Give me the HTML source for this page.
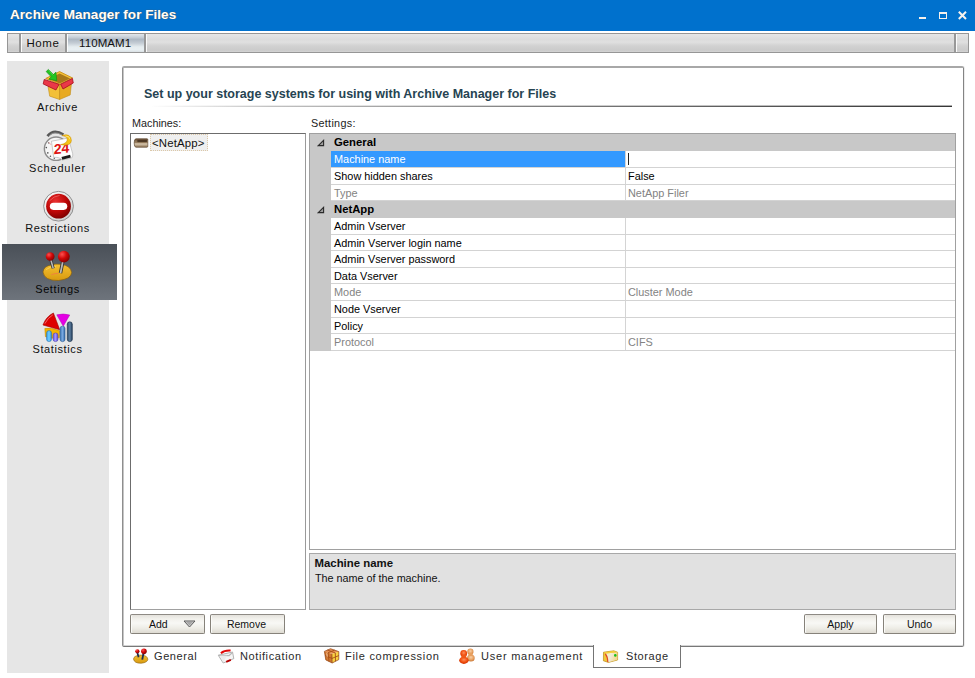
<!DOCTYPE html>
<html><head><meta charset="utf-8">
<style>
*{margin:0;padding:0;box-sizing:border-box}
html,body{width:975px;height:678px;overflow:hidden;background:#fff;font-family:"Liberation Sans",sans-serif;font-size:11px;color:#000}
.a{position:absolute}
#title{left:0;top:0;width:975px;height:31px;background:#0071cd}
#title .t{left:10px;top:7px;font-weight:bold;font-size:13.6px;color:#fff;white-space:nowrap;text-shadow:0 0 1px #7a5020}
/* top tab bar */
#tabbar{left:7px;top:33px;width:962px;height:20px;border:1px solid #969696;background:linear-gradient(#e6e6e6 0%,#dcdcdc 30%,#e0e0e0 45%,#d2d2d2 65%,#cbcbcb 90%,#d4d4d4 100%)}
.dv{top:0;width:3px;height:18px;border-left:2px solid #989898;border-right:1px solid #fafafa}
.tseg{top:0;height:18px;border-left:1px solid #a8a8a8;border-right:1px solid #a8a8a8;background:linear-gradient(#e8e8e8,#dadada 45%,#cfcfcf 55%,#dedede)}
.ttx{font-family:"Liberation Sans",sans-serif;font-size:11.5px;color:#111;white-space:nowrap}
/* sidebar */
#side{left:7px;top:61px;width:102px;height:612px;background:#e6e6e6}
#selbg{left:2px;top:244px;width:115px;height:56px;background:linear-gradient(#4a5058,#5b6169 50%,#6e747c)}
.sl{width:120px;left:-2.5px;text-align:center;font-size:11px;letter-spacing:0.6px;color:#111;white-space:nowrap}
/* main panel */
#panel{left:122px;top:66px;width:842px;height:581px;border-top:2px solid #a8a8a8;border-left:1px solid #8e8e8e;border-right:1px solid #848484;border-bottom:1px solid #787878;box-shadow:inset 1px 0 0 #c6c6c6,inset 0 -1px 0 #d4d4d4,1px 0 0 #ececec;border-radius:2px}
#hdr{left:144px;top:87px;font-weight:bold;font-size:12.5px;color:#264452;white-space:nowrap}
#hline{left:150px;top:106px;width:802px;height:1px;background:linear-gradient(90deg,rgba(50,50,50,0) 0%,rgba(50,50,50,0.3) 15%,rgba(50,50,50,0.6) 45%,#363636 100%)}
#hline2{left:150px;top:105px;width:802px;height:1px;background:linear-gradient(90deg,rgba(90,90,90,0) 0%,rgba(90,90,90,0.12) 15%,rgba(90,90,90,0.25) 45%,rgba(90,90,90,0.5) 100%)}
.lbl{font-size:10.8px;color:#222;white-space:nowrap}
#mlist{left:130px;top:133px;width:176px;height:477px;border:1px solid #6c6c6c;border-right-color:#9a9a9a;border-bottom-color:#a0a0a0;background:#fff}
#grid{left:309px;top:133px;width:647px;height:417px;border:1px solid #a0a0a0;background:#fff}
#gmargin{left:0;top:0;width:21px;height:217px;background:#c8c8c8}
.row{left:21px;width:624px;height:16.6px;border-bottom:1px solid #d3d3d3}
.cat{left:0;width:645px;height:16.6px;background:#c8c8c8}
.rn{left:3px;top:2px;font-size:10.9px;white-space:nowrap}
.rv{left:294px;top:0;height:100%;border-left:1px solid #d4d4d4}
.rvt{left:2px;top:2px;font-size:10.9px;white-space:nowrap}
.gray{color:#838383}
#desc{left:309px;top:553px;width:647px;height:57px;border:1px solid #a8a8a8;background:#e1e1e1}
.btn{height:20px;border:1px solid #86827a;border-top-color:#8e8a84;border-radius:2px;box-shadow:inset 1px 0 0 #fbfbf9;background:linear-gradient(#e4e2dc 0%,#f2f1ec 22%,#f8f8f5 45%,#eeede7 72%,#dedbd2 100%);text-align:center;font-size:10.5px;line-height:18px;color:#111}
/* bottom tabs */
.bt{top:650px;font-size:11px;letter-spacing:0.6px;color:#2a2a2a;white-space:nowrap}
#stab{left:593px;top:645px;width:88px;height:23px;border:1px solid #747474;border-top:none;background:#fff}
</style></head><body>

<div id="title" class="a"><div class="t a">Archive Manager for Files</div>
 <div class="a" style="left:919px;top:16.5px;width:6.5px;height:2.5px;background:#f4f0ec"></div>
 <div class="a" style="left:939px;top:12px;width:8px;height:7px;border:1px solid #f4f0ec;border-top-width:2px"></div>
 <svg class="a" style="left:957px;top:10px" width="11" height="11" viewBox="0 0 11 11"><path d="M1.8 1.8 L9 9 M9 1.8 L1.8 9" stroke="#f6f2ee" stroke-width="2"/></svg>
</div>

<div id="tabbar" class="a">
 <div class="a" style="left:58px;top:0;width:78px;height:18px;background:linear-gradient(#e2e6ea 0%,#c8d0d8 18%,#aeb8c3 30%,#c4ccd4 50%,#e6edf0 72%,#e8eff2 88%,#d8dfe4 100%)"></div>
 <div class="dv a" style="left:11px"></div>
 <div class="dv a" style="left:57px"></div>
 <div class="dv a" style="left:136px"></div>
 <div class="dv a" style="left:946px"></div>
 <div class="ttx a" style="left:18.5px;top:3px;letter-spacing:0.55px">Home</div>
 <div class="ttx a" style="left:71px;top:3px;letter-spacing:0.1px">110MAM1</div>
</div>
<div id="side" class="a"></div>
<div id="selbg" class="a"></div>

<!-- Archive icon -->
<svg class="a" style="left:36px;top:64px" width="44" height="40" viewBox="0 0 746 678">
 <path d="M165 245 L400 128 L622 238 L400 345 Z" fill="#f4c23a" stroke="#c88a10" stroke-width="14"/>
 <path d="M215 250 L400 160 L580 245 L400 330 Z" fill="#a8781a"/>
 <path d="M205 385 L400 345 L400 602 L232 545 Z" fill="#f2c038" stroke="#c08a18" stroke-width="10"/>
 <path d="M400 345 L602 320 L580 525 L400 602 Z" fill="#e8aa22" stroke="#c08a18" stroke-width="10"/>
 <path d="M140 262 L392 345 L338 440 L122 338 Z" fill="#ea3848" stroke="#a81020" stroke-width="14"/>
 <path d="M418 342 L618 246 L632 322 L458 424 Z" fill="#ea3848" stroke="#a81020" stroke-width="14"/>
 <path d="M172 128 L210 92 L295 178 L338 138 L352 282 L220 258 L258 218 Z" fill="#22c422" stroke="#0e8a0e" stroke-width="10"/>
 <path d="M215 105 L290 190" stroke="#7cf07c" stroke-width="12" opacity="0.6"/>
</svg>
<div class="sl a" style="top:101px">Archive</div>

<!-- Scheduler icon -->
<svg class="a" style="left:36px;top:124px" width="44" height="40" viewBox="0 0 746 678">
 <path d="M195 205 Q300 75 465 180" fill="none" stroke="#585858" stroke-width="48"/>
 <path d="M225 200 Q300 110 440 185" fill="none" stroke="#9a9a9a" stroke-width="14"/>
 <circle cx="340" cy="418" r="198" fill="#f6f6f6" stroke="#8c8c8c" stroke-width="24"/>
 <g fill="#555"><circle cx="175" cy="400" r="14"/><circle cx="200" cy="490" r="14"/><circle cx="245" cy="545" r="13"/><circle cx="310" cy="580" r="12"/><circle cx="215" cy="320" r="12"/></g>
 <path d="M215 310 L260 355" stroke="#e05050" stroke-width="8"/>
 <path d="M262 292 L548 238 L612 468 Q640 540 600 578 L440 612 Q410 560 300 565 Z" fill="#fdfdfd" stroke="#a8a8a8" stroke-width="10"/>
 <text x="345" y="500" font-family="Liberation Sans" font-weight="bold" font-size="240" fill="#dd1515" transform="rotate(-6 400 420) skewX(-6)">24</text>
 <path d="M432 560 L578 522 L590 568 L446 604 Z" fill="#1a1a1a"/>
 <path d="M440 195 Q590 150 600 280 Q595 380 415 350 Q540 330 530 250 Q510 200 440 195 Z" fill="#f4c418" stroke="#d09000" stroke-width="10"/>
 <path d="M500 205 Q570 200 575 260" fill="none" stroke="#fff0a0" stroke-width="16" opacity="0.7"/>
</svg>
<div class="sl a" style="top:162px;letter-spacing:0.82px">Scheduler</div>

<!-- Restrictions icon -->
<svg class="a" style="left:36px;top:186px" width="44" height="40" viewBox="0 0 746 678">
 <defs><radialGradient id="rg" cx="0.38" cy="0.3" r="0.75"><stop offset="0" stop-color="#e83030"/><stop offset="0.55" stop-color="#c00808"/><stop offset="1" stop-color="#780000"/></radialGradient>
 <linearGradient id="rring" x1="0" y1="0" x2="1" y2="1"><stop offset="0" stop-color="#ffffff"/><stop offset="1" stop-color="#c8c8c8"/></linearGradient></defs>
 <circle cx="382" cy="343" r="252" fill="url(#rring)" stroke="#8a8a8a" stroke-width="16"/>
 <circle cx="382" cy="343" r="210" fill="url(#rg)"/>
 <path d="M230 250 Q300 170 400 160" fill="none" stroke="#ff9090" stroke-width="14" opacity="0.6"/>
 <rect x="235" y="283" width="295" height="122" rx="61" fill="#fff"/>
</svg>
<div class="sl a" style="top:222px">Restrictions</div>

<!-- Settings icon -->
<svg class="a" style="left:36px;top:246px" width="44" height="40" viewBox="0 0 746 678">
 <defs><radialGradient id="ball" cx="0.35" cy="0.3" r="0.75"><stop offset="0" stop-color="#ff5050"/><stop offset="0.5" stop-color="#d00808"/><stop offset="1" stop-color="#800000"/></radialGradient>
 <linearGradient id="base" x1="0" y1="0" x2="0" y2="1"><stop offset="0" stop-color="#f4c030"/><stop offset="1" stop-color="#d89a10"/></linearGradient></defs>
 <path d="M118 440 Q130 340 260 320 Q330 300 420 310 Q590 330 605 450 Q600 560 380 585 Q140 590 118 440 Z" fill="url(#base)" stroke="#8a6010" stroke-width="12"/>
 <path d="M170 400 Q250 340 340 350" fill="none" stroke="#ffe080" stroke-width="14" opacity="0.7"/>
 <path d="M260 485 Q330 460 380 465" fill="none" stroke="#f08040" stroke-width="16"/>
 <path d="M250 230 L292 380" stroke="#303030" stroke-width="52"/>
 <path d="M250 230 L292 380" stroke="#b8b8b8" stroke-width="26"/>
 <path d="M455 260 L415 460" stroke="#303030" stroke-width="58"/>
 <path d="M455 260 L415 460" stroke="#b8b8b8" stroke-width="30"/>
 <circle cx="240" cy="178" r="74" fill="url(#ball)"/>
 <circle cx="472" cy="180" r="100" fill="url(#ball)"/>
</svg>
<div class="sl a" style="top:282.7px;color:#050505">Settings</div>

<!-- Statistics icon -->
<svg class="a" style="left:36px;top:306px" width="44" height="40" viewBox="0 0 746 678">
 <defs><linearGradient id="b1" x1="0" x2="1"><stop offset="0" stop-color="#3aa0f0"/><stop offset="0.5" stop-color="#70d0ff"/><stop offset="1" stop-color="#3090e0"/></linearGradient>
 <linearGradient id="b2" x1="0" x2="1"><stop offset="0" stop-color="#6a60e0"/><stop offset="0.5" stop-color="#a090ff"/><stop offset="1" stop-color="#5a50d0"/></linearGradient>
 <linearGradient id="b3" x1="0" x2="1"><stop offset="0" stop-color="#3c78b8"/><stop offset="0.5" stop-color="#78a8e0"/><stop offset="1" stop-color="#3068a8"/></linearGradient>
 <linearGradient id="b4" x1="0" x2="1"><stop offset="0" stop-color="#2c4a68"/><stop offset="0.5" stop-color="#6080a0"/><stop offset="1" stop-color="#203a58"/></linearGradient></defs>
 <path d="M150 380 Q260 360 400 420 L395 540 Q280 560 160 520 Z" fill="#f4b400" stroke="#c88a00" stroke-width="10"/>
 <path d="M118 322 Q170 180 295 118 L402 402 Z" fill="#dd0000" stroke="#a00000" stroke-width="10"/>
 <path d="M150 300 Q200 200 285 150" fill="none" stroke="#ffb0b0" stroke-width="12" opacity="0.8"/>
 <path d="M352 150 Q460 120 572 152 L462 342 Z" fill="#e400e4" stroke="#b000b0" stroke-width="8"/>
 <rect x="180" y="418" width="82" height="185" rx="38" fill="url(#b1)" stroke="#2070b0" stroke-width="10"/>
 <rect x="290" y="458" width="82" height="145" rx="38" fill="url(#b2)" stroke="#4a40b0" stroke-width="10"/>
 <rect x="408" y="342" width="84" height="262" rx="40" fill="url(#b3)" stroke="#2a5a90" stroke-width="10"/>
 <rect x="530" y="268" width="86" height="336" rx="42" fill="url(#b4)" stroke="#1a3048" stroke-width="10"/>
</svg>
<div class="sl a" style="top:343px">Statistics</div>

<div id="panel" class="a"></div>
<div id="hdr" class="a">Set up your storage systems for using with Archive Manager for Files</div>
<div id="hline" class="a"></div><div id="hline2" class="a"></div>

<div class="lbl a" style="left:132px;top:117px">Machines:</div>
<div class="lbl a" style="left:311px;top:117px;letter-spacing:0.3px">Settings:</div>

<div id="mlist" class="a">
 <svg class="a" style="left:2px;top:4px" width="16" height="10" viewBox="0 0 16 11"><defs><linearGradient id="nd" x1="0" y1="0" x2="0" y2="1"><stop offset="0" stop-color="#6a5038"/><stop offset="0.45" stop-color="#9a8060"/><stop offset="0.6" stop-color="#d8c8b0"/><stop offset="1" stop-color="#8a7050"/></linearGradient></defs><path d="M2.5 0.8 L14.8 0.8 Q15.5 0.8 15.5 2 L15.5 9 Q15.5 10.2 14.5 10.2 L2.5 10.2 Q0.5 10.2 0.5 5.5 Q0.5 0.8 2.5 0.8 Z" fill="url(#nd)" stroke="#5a4630" stroke-width="0.7"/><rect x="4" y="2" width="10.5" height="2.5" fill="#3e2c1a" opacity="0.8"/></svg>
 <div class="a" style="left:19px;top:0px;width:58px;height:17px;background:#efefef;border:1px dotted #dcc8a8"></div>
 <div class="a" style="left:21px;top:3.2px;font-size:11.4px;letter-spacing:0.15px;color:#111">&lt;NetApp&gt;</div>
</div>

<div id="grid" class="a">
 <div id="gmargin" class="a"></div>
 <div class="cat a" style="top:0"><svg class="a" style="left:7px;top:5px" width="8" height="8" viewBox="0 0 8 8"><path d="M1.3 6.6 L6.6 1.3 L6.6 6.6 Z" fill="#a0a0a0" stroke="#2a2a2a" stroke-width="1.1" stroke-linejoin="miter"/></svg><span class="rn a" style="left:24px;font-weight:bold;font-size:11.3px">General</span></div>
 <div class="row a" style="top:17px;background:#fff;height:17.2px"><div class="a" style="left:0;top:0;width:294px;height:16.2px;background:#3399ff"></div><span class="rn a" style="color:#fff">Machine name</span><div class="rv a" style="width:330px"><div class="a" style="left:2px;top:2px;width:1px;height:12px;background:#222"></div></div></div>
 <div class="row a" style="top:34.2px"><span class="rn a">Show hidden shares</span><div class="rv a" style="width:330px"><span class="rvt a">False</span></div></div>
 <div class="row a" style="top:50.8px"><span class="rn a gray">Type</span><div class="rv a" style="width:330px"><span class="rvt a gray">NetApp Filer</span></div></div>
 <div class="cat a" style="top:67.4px"><svg class="a" style="left:7px;top:5px" width="8" height="8" viewBox="0 0 8 8"><path d="M1.3 6.6 L6.6 1.3 L6.6 6.6 Z" fill="#a0a0a0" stroke="#2a2a2a" stroke-width="1.1" stroke-linejoin="miter"/></svg><span class="rn a" style="left:24px;font-weight:bold;font-size:11.3px">NetApp</span></div>
 <div class="row a" style="top:84px"><span class="rn a">Admin Vserver</span><div class="rv a" style="width:330px"></div></div>
 <div class="row a" style="top:100.6px"><span class="rn a">Admin Vserver login name</span><div class="rv a" style="width:330px"></div></div>
 <div class="row a" style="top:117.2px"><span class="rn a">Admin Vserver password</span><div class="rv a" style="width:330px"></div></div>
 <div class="row a" style="top:133.8px"><span class="rn a">Data Vserver</span><div class="rv a" style="width:330px"></div></div>
 <div class="row a" style="top:150.4px"><span class="rn a gray">Mode</span><div class="rv a" style="width:330px"><span class="rvt a gray">Cluster Mode</span></div></div>
 <div class="row a" style="top:167px"><span class="rn a">Node Vserver</span><div class="rv a" style="width:330px"></div></div>
 <div class="row a" style="top:183.6px"><span class="rn a">Policy</span><div class="rv a" style="width:330px"></div></div>
 <div class="row a" style="top:200.2px"><span class="rn a gray">Protocol</span><div class="rv a" style="width:330px"><span class="rvt a gray">CIFS</span></div></div>
</div>

<div id="desc" class="a">
 <div class="a" style="left:4.5px;top:3px;font-weight:bold;font-size:11.4px;color:#111">Machine name</div>
 <div class="a" style="left:5px;top:18px;font-size:10.8px;color:#111">The name of the machine.</div>
</div>

<div class="btn a" style="left:130px;top:614px;width:75px"><span class="a" style="left:18px;top:0">Add</span><svg class="a" style="left:52px;top:5px" width="13" height="8" viewBox="0 0 13 8"><path d="M1 1 L12 1 L6.5 7 Z" fill="#d8d8d8" stroke="#5a5a5a" stroke-width="1"/><path d="M3 2 L10 2 L6.5 5.5 Z" fill="#a8a8a8"/></svg></div>
<div class="btn a" style="left:210px;top:614px;width:75px;padding-right:2px">Remove</div>
<div class="btn a" style="left:804px;top:614px;width:73px">Apply</div>
<div class="btn a" style="left:883px;top:614px;width:73px">Undo</div>

<!-- bottom tabs -->
<div id="stab" class="a"></div>
<svg class="a" style="left:129.8px;top:645.8px" width="22" height="20" viewBox="0 0 746 678">
 <path d="M118 440 Q130 340 260 320 Q330 300 420 310 Q590 330 605 450 Q600 560 380 585 Q140 590 118 440 Z" fill="url(#base)" stroke="#8a6010" stroke-width="20"/>
 <path d="M250 230 L292 380" stroke="#203050" stroke-width="60"/>
 <path d="M455 260 L415 460" stroke="#203050" stroke-width="64"/>
 <circle cx="250" cy="178" r="72" fill="url(#ball)"/>
 <circle cx="472" cy="180" r="96" fill="url(#ball)"/>
</svg>
<div class="bt a" style="left:154px">General</div>
<svg class="a" style="left:212px;top:645px" width="28" height="23" viewBox="0 0 28 23">
 <path d="M6.3 10.3 L20.5 7 L21.8 13.6 L11.2 18 Z" fill="#f6f6f6" stroke="#a0a0a0" stroke-width="0.8"/>
 <path d="M6.3 10.3 L17 10.6 L20.8 7.2" fill="none" stroke="#b8b8b8" stroke-width="1.2"/>
 <path d="M8.2 10.6 L15 10.8 L11.2 17.6 Z" fill="#ececec"/>
 <path d="M8.9 8.2 Q12.5 5.2 18.6 5.6" fill="none" stroke="#e00808" stroke-width="2"/>
 <path d="M14.2 16.8 L18.8 14.9" fill="none" stroke="#b80000" stroke-width="2"/>
</svg>
<div class="bt a" style="left:240px">Notification</div>
<svg class="a" style="left:320px;top:645px" width="25" height="23" viewBox="0 0 25 23">
 <path d="M4.4 6.4 L11.9 8.8 L12.2 18 L5.8 14.9 Z" fill="#d07830"/>
 <path d="M11.9 8.8 L18.8 6.6 L18.8 14.6 L12.2 18 Z" fill="#f8d040"/>
 <path d="M4.4 6.4 L10.5 3.7 L18.8 6.6 L11.9 8.8 Z" fill="#e89050"/>
 <path d="M8.1 7.6 L9 16.4 M5.1 10.6 L12 13.4 M15.3 7.7 L15.5 16.3 M12 13.4 L18.8 10.6 M7.4 5 L15 7.8 M14.6 5.1 L8 7.7" stroke="#a85018" stroke-width="0.9" fill="none"/>
 <path d="M4.4 6.4 L10.5 3.7 L18.8 6.6 L18.8 14.6 L12.2 18 L5.8 14.9 Z M11.9 8.8 L12.2 18" stroke="#904010" stroke-width="0.7" fill="none"/>
 <path d="M6 8 L7.5 8.5 L8 12 L6.5 11.5 Z" fill="#f8c8a0" opacity="0.7"/>
</svg>
<div class="bt a" style="left:345px;letter-spacing:0.72px">File compression</div>
<svg class="a" style="left:452px;top:645px" width="28" height="23" viewBox="0 0 28 23">
 <defs><radialGradient id="p1" cx="0.5" cy="0.4" r="0.6"><stop offset="0" stop-color="#ff9060"/><stop offset="0.6" stop-color="#f05010"/><stop offset="1" stop-color="#d03000"/></radialGradient>
 <radialGradient id="p2" cx="0.5" cy="0.4" r="0.6"><stop offset="0" stop-color="#f8d0a8"/><stop offset="0.6" stop-color="#e8a060"/><stop offset="1" stop-color="#c87838"/></radialGradient></defs>
 <circle cx="18.4" cy="6.7" r="3.1" fill="url(#p2)"/><ellipse cx="18.9" cy="13" rx="3.8" ry="3.5" fill="url(#p2)"/><rect x="16.6" y="8" width="4" height="3" fill="#e8a060"/>
 <circle cx="11.7" cy="8.5" r="3.4" fill="url(#p1)"/><ellipse cx="11.9" cy="15.3" rx="4.7" ry="3.6" fill="url(#p1)"/><rect x="9.4" y="10" width="4.8" height="3.2" fill="#f05818"/>
</svg>
<div class="bt a" style="left:481px;letter-spacing:0.78px">User management</div>
<svg class="a" style="left:595px;top:645px" width="30" height="23" viewBox="0 0 30 23">
 <defs><linearGradient id="sf" x1="0" y1="0" x2="1" y2="0.3"><stop offset="0" stop-color="#f8f4c0"/><stop offset="0.5" stop-color="#f0ead8"/><stop offset="1" stop-color="#f4d890"/></linearGradient></defs>
 <path d="M8.5 7.2 L18.8 5.8 L22.6 7.2 L22.6 15 L13.4 17.4 L8.4 15.8 Z" fill="#f2c838" stroke="#b88a18" stroke-width="0.7"/>
 <path d="M10.8 8.6 L22.4 7.3 L22.4 14.8 L13.4 17.2 Z" fill="url(#sf)"/>
 <path d="M9 7.3 L18.8 6 L22.4 7.3 L10.8 8.6 Z" fill="#f4d040"/>
 <path d="M10.8 8.6 Q13.2 11 13.4 17.2 L12.2 17 Q12 12 9.8 9 Z" fill="#e04828"/>
 <circle cx="20.3" cy="10.4" r="1.3" fill="#18c018"/>
</svg>
<div class="bt a" style="left:626px">Storage</div>

</body></html>
